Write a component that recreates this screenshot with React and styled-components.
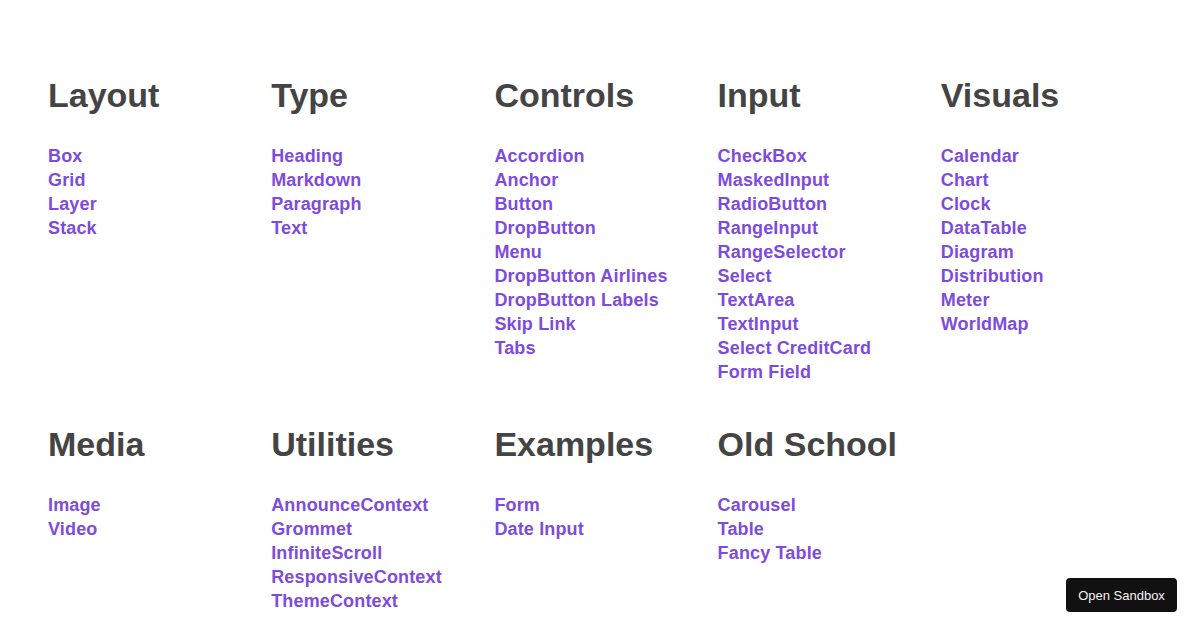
import styled, { createGlobalStyle } from 'styled-components'

const GlobalStyle = createGlobalStyle`
  html, body {
    margin: 0;
    padding: 0;
    background: #ffffff;
    font-family: "Liberation Sans", Arial, sans-serif;
  }
`;

const Page = styled.div`
  display: grid;
  grid-template-columns: repeat(5, 1fr);
  row-gap: 40px;
  padding: 75px 36px 0 48px;
  height: 630px;
  box-sizing: border-box;
  align-content: start;
`;

const Section = styled.section`
  display: flex;
  flex-direction: column;
`;

const Heading = styled.h2`
  margin: 0 0 29px;
  font-size: 34px;
  line-height: 40px;
  font-weight: 700;
  color: #444444;
`;

const LinkList = styled.div`
  display: flex;
  flex-direction: column;
  align-items: flex-start;
`;

const Link = styled.a`
  font-size: 18px;
  line-height: 24px;
  font-weight: 700;
  letter-spacing: 0.15px;
  color: #7d4cdb;
  text-decoration: none;
  cursor: pointer;
`;

const SandboxButton = styled.button`
  position: fixed;
  right: 23px;
  bottom: 18px;
  width: 111px;
  height: 34px;
  border: none;
  border-radius: 4px;
  background: #111111;
  color: #f2f2f2;
  font-family: "Liberation Sans", Arial, sans-serif;
  font-size: 13px;
  cursor: pointer;
`;

const sections = [
  ['Layout', ['Box', 'Grid', 'Layer', 'Stack']],
  ['Type', ['Heading', 'Markdown', 'Paragraph', 'Text']],
  ['Controls', ['Accordion', 'Anchor', 'Button', 'DropButton', 'Menu', 'DropButton Airlines', 'DropButton Labels', 'Skip Link', 'Tabs']],
  ['Input', ['CheckBox', 'MaskedInput', 'RadioButton', 'RangeInput', 'RangeSelector', 'Select', 'TextArea', 'TextInput', 'Select CreditCard', 'Form Field']],
  ['Visuals', ['Calendar', 'Chart', 'Clock', 'DataTable', 'Diagram', 'Distribution', 'Meter', 'WorldMap']],
  ['Media', ['Image', 'Video']],
  ['Utilities', ['AnnounceContext', 'Grommet', 'InfiniteScroll', 'ResponsiveContext', 'ThemeContext']],
  ['Examples', ['Form', 'Date Input']],
  ['Old School', ['Carousel', 'Table', 'Fancy Table']],
];

const App = () => {
  return (
    <>
      <GlobalStyle />
      <Page>
        {sections.map(([title, links]) => (
          <Section key={title}>
            <Heading>{title}</Heading>
            <LinkList>
              {links.map((name) => (
                <Link key={name}>{name}</Link>
              ))}
            </LinkList>
          </Section>
        ))}
      </Page>
      <SandboxButton>Open Sandbox</SandboxButton>
    </>
  );
}

export default App;
